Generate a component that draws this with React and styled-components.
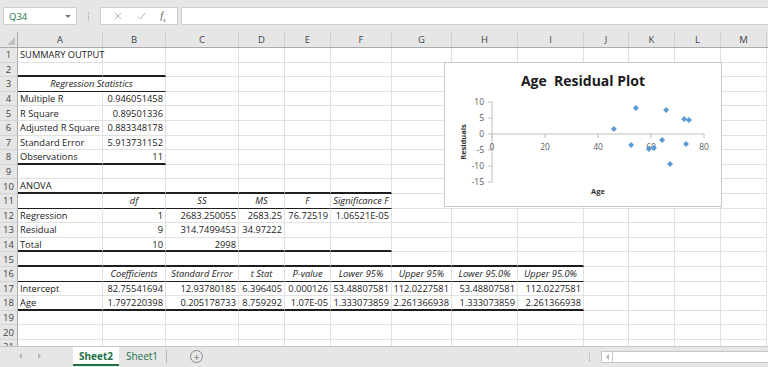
import React from 'react';
import styled, { createGlobalStyle } from 'styled-components';

const COLS = [85, 63, 73, 46, 46, 61, 60, 66, 66, 45, 46, 46, 46];
const LETTERS = 'ABCDEFGHIJKLM'.split('');
const TEMPLATE = `18px ${COLS.map(w => w + 'px').join(' ')}`;
const GREEN = '#217346';

const GlobalStyle = createGlobalStyle`
  html, body {
    margin: 0;
    padding: 0;
  }
  body {
    width: 768px;
    height: 367px;
    overflow: hidden;
    background: #fff;
    font-family: "Open Sans", "Liberation Sans", sans-serif;
  }
`

const Window = styled.div`
  display: flex;
  flex-direction: column;
  width: 768px;
  height: 367px;
  overflow: hidden;
`

/* formula bar */
const FormulaBar = styled.div`
  display: flex;
  align-items: flex-start;
  height: 32px;
  padding: 7px 0 0 3px;
  box-sizing: border-box;
  background: #e6e6e6;
`
const Box = styled.div`
  height: 18px;
  box-sizing: border-box;
  background: #fff;
  border: 1px solid #cfcfcf;
  display: flex;
  align-items: center;
`
const NameBox = styled(Box)`
  width: 74px;
  justify-content: space-between;
  padding: 0 5px 0 5px;
  font-size: 9.5px;
  color: ${GREEN};
`
const Caret = styled.span`
  width: 0;
  height: 0;
  border-left: 3px solid transparent;
  border-right: 3px solid transparent;
  border-top: 3px solid #7a7a7a;
`
const Grip = styled.div`
  width: 1px;
  height: 9px;
  margin: 5px 10px 0 11px;
  border-left: 1px dotted #a6a6a6;
`
const FuncBox = styled(Box)`
  width: 78px;
  justify-content: space-around;
  padding: 0 4px 0 6px;
`
const Fx = styled.span`
  font-family: "Liberation Serif", serif;
  font-style: italic;
  font-size: 10px;
  color: #555;
  sub {
    font-size: 6px;
  }
`
const FormulaInput = styled(Box)`
  flex: 1;
  margin-left: 3px;
  border-right: none;
`

/* grid */
const HeaderRow = styled.div`
  display: grid;
  grid-template-columns: ${TEMPLATE};
  height: 16px;
  background: #e6e6e6;
  border-bottom: 1px solid #ababab;
  box-sizing: border-box;
`
const ColHead = styled.div`
  display: flex;
  align-items: center;
  justify-content: center;
  font-size: 9.5px;
  color: #444;
  border-right: 1px solid ${p => (p.$corner ? '#ababab' : '#d0d0d0')};
  position: relative;
`
const CornerMark = styled.span`
  position: absolute;
  right: 2px;
  bottom: 2px;
  width: 0;
  height: 0;
  border-left: 8px solid transparent;
  border-bottom: 8px solid #c2c2c2;
`
const Sheet = styled.div`
  position: relative;
  display: grid;
  grid-template-columns: ${TEMPLATE};
  grid-auto-rows: 14.6px;
  height: 298px;
  overflow: hidden;
`
const RowHead = styled.div`
  display: flex;
  align-items: center;
  justify-content: center;
  font-size: 9.5px;
  color: #444;
  background: #e6e6e6;
  border-right: 1px solid #ababab;
  border-bottom: 1px solid #d4d4d4;
  box-sizing: border-box;
`
const LINES = {
  thick: '2px solid #1e1e1e',
  thin: '1px solid #1e1e1e',
  none: '1px solid #e1e1e1',
}
const Cell = styled.div`
  grid-column: span ${p => p.$span || 1};
  display: flex;
  align-items: center;
  justify-content: ${p => (p.$align === 'right' ? 'flex-end' : p.$align === 'center' ? 'center' : 'flex-start')};
  padding: 0 2px;
  box-sizing: border-box;
  border-right: 1px solid #e1e1e1;
  border-bottom: ${p => LINES[p.$line || 'none']};
  font-size: 9.3px;
  font-style: ${p => (p.$italic ? 'italic' : 'normal')};
  color: #1a1a1a;
  white-space: nowrap;
  overflow: visible;
`

/* chart */
const ChartFrame = styled.div`
  position: absolute;
  top: 14px;
  left: 444px;
  width: 278px;
  height: 145px;
  box-sizing: border-box;
  background: #fff;
  border: 1px solid #c9c9c9;
  z-index: 2;
`
const ChartTitle = styled.text`
  font-family: "Open Sans", sans-serif;
  font-weight: 700;
  font-size: 14px;
  white-space: pre;
  fill: #1a1a1a;
`
const AxisLabel = styled.text`
  font-family: "Open Sans", sans-serif;
  font-size: 8.5px;
  fill: #595959;
`
const AxisTitle = styled.text`
  font-family: "Open Sans", sans-serif;
  font-weight: 700;
  font-size: 7.5px;
  fill: #333;
`

/* tab bar */
const TabBar = styled.div`
  display: flex;
  align-items: flex-start;
  height: 21px;
  background: #e6e6e6;
  border-top: 1px solid #c6c6c6;
  box-sizing: border-box;
`
const Nav = styled.div`
  display: flex;
  align-items: center;
  gap: 16px;
  width: 73px;
  height: 18px;
  padding-left: 19px;
  box-sizing: border-box;
`
const Arrow = styled.span`
  width: 0;
  height: 0;
  border-top: 3px solid transparent;
  border-bottom: 3px solid transparent;
  ${p => (p.$dir === 'left' ? 'border-right: 3px solid #b5b5b5;' : 'border-left: 3px solid #b5b5b5;')}
`
const Tab = styled.div`
  width: 46px;
  height: 17px;
  display: flex;
  align-items: center;
  justify-content: center;
  font-size: 10px;
  color: ${GREEN};
  font-weight: ${p => (p.$active ? 700 : 400)};
  background: ${p => (p.$active ? '#fff' : 'transparent')};
  border-bottom: 2px solid ${p => (p.$active ? GREEN : 'transparent')};
`
const TabSep = styled.div`
  width: 1px;
  height: 13px;
  margin: 3px 0 0 1px;
  background: #b8b8b8;
`
const AddSheet = styled.div`
  width: 11px;
  height: 11px;
  margin: 3px 0 0 23px;
  border: 1px solid #8a8a8a;
  border-radius: 50%;
  display: flex;
  align-items: center;
  justify-content: center;
  font-size: 10px;
  line-height: 1;
  color: #6a6a6a;
`
const Spacer = styled.div`
  flex: 1;
`
const Dots = styled.div`
  width: 1px;
  height: 9px;
  margin: 5px 10px 0 0;
  border-left: 1px dotted #a6a6a6;
`
const ScrollBar = styled.div`
  display: flex;
  width: 167px;
  height: 12px;
  margin-top: 4px;
  box-sizing: border-box;
  background: #fff;
  border: 1px solid #c6c6c6;
  border-right: none;
`
const ScrollBtn = styled.div`
  width: 10px;
  display: flex;
  align-items: center;
  justify-content: center;
  border-right: 1px solid #c6c6c6;
`

const ROWS = [
  { n: 1, cells: ['SUMMARY OUTPUT'] },
  { n: 2, line: [2, 'thick'] },
  { n: 3, cells: [{ h: 'Regression Statistics', span: 2 }], line: [2, 'thin'] },
  { n: 4, cells: ['Multiple R', '0.946051458'] },
  { n: 5, cells: ['R Square', '0.89501336'] },
  { n: 6, cells: ['Adjusted R Square', '0.883348178'] },
  { n: 7, cells: ['Standard Error', '5.913731152'] },
  { n: 8, cells: ['Observations', '11'], line: [2, 'thick'] },
  { n: 9 },
  { n: 10, cells: ['ANOVA'], line: [6, 'thick'] },
  { n: 11, cells: ['', { h: 'df' }, { h: 'SS' }, { h: 'MS' }, { h: 'F' }, { h: 'Significance F' }], line: [6, 'thin'] },
  { n: 12, cells: ['Regression', '1', '2683.250055', '2683.25', '76.72519', '1.06521E-05'] },
  { n: 13, cells: ['Residual', '9', '314.7499453', '34.97222'] },
  { n: 14, cells: ['Total', '10', '2998'], line: [6, 'thick'] },
  { n: 15, line: [9, 'thick'] },
  {
    n: 16,
    cells: ['', { h: 'Coefficients' }, { h: 'Standard Error' }, { h: 't Stat' }, { h: 'P-value' },
      { h: 'Lower 95%' }, { h: 'Upper 95%' }, { h: 'Lower 95.0%' }, { h: 'Upper 95.0%' }],
    line: [9, 'thin'],
  },
  {
    n: 17,
    cells: ['Intercept', '82.75541694', '12.93780185', '6.396405', '0.000126', '53.48807581',
      '112.0227581', '53.48807581', '112.0227581'],
  },
  {
    n: 18,
    cells: ['Age', '1.797220398', '0.205178733', '8.759292', '1.07E-05', '1.333073859',
      '2.261366938', '1.333073859', '2.261366938'],
    line: [9, 'thick'],
  },
  { n: 19 },
  { n: 20 },
  { n: 21 },
];

const isNum = v => /^-?[\d.]+(E-?\d+)?$/.test(v);

function SheetRow({ n, cells = [], line }) {
  const out = [<RowHead key="h">{n}</RowHead>];
  let c = 0;
  while (c < LETTERS.length) {
    const raw = cells[c];
    const span = raw && raw.span ? raw.span : 1;
    const kind = line && c < line[0] ? line[1] : 'none';
    if (raw && typeof raw === 'object') {
      out.push(
        <Cell key={c} $span={span} $align="center" $italic $line={kind}>{raw.h}</Cell>
      );
    } else {
      out.push(
        <Cell key={c} $align={raw && isNum(raw) ? 'right' : 'left'} $line={kind}>{raw || ''}</Cell>
      );
    }
    c += span;
  }
  return out;
}

// residuals read off the plot
const POINTS = [
  [46.0, 1.56], [54.3, 8.13], [52.5, -3.44], [59.2, -4.69], [61.1, -4.38], [64.2, -1.88],
  [65.7, 7.5], [67.2, -9.38], [72.5, 4.69], [73.2, -3.13], [74.3, 4.38],
];
const X0 = 47;
const Y0 = 71;
const toX = a => X0 + a * 2.65;
const toY = r => Y0 - r * 3.2;

function ResidualChart() {
  return (
    <ChartFrame>
      <svg width="276" height="143" viewBox="0 0 276 143">
        <ChartTitle x="138" y="23" textAnchor="middle">{'Age  Residual Plot'}</ChartTitle>
        <line x1={X0} y1={toY(10)} x2={X0} y2={toY(-15)} stroke="#bfbfbf" />
        {[10, 5, 0, -5, -10, -15].map(v => (
          <g key={v}>
            <line x1={X0 - 4} y1={toY(v)} x2={X0} y2={toY(v)} stroke="#bfbfbf" />
            <AxisLabel x={X0 - 8} y={toY(v) + 3} textAnchor="end">{v}</AxisLabel>
          </g>
        ))}
        <line x1={X0} y1={Y0} x2={toX(80)} y2={Y0} stroke="#bfbfbf" />
        {[0, 20, 40, 60, 80].map(v => (
          <g key={v}>
            <line x1={toX(v)} y1={Y0} x2={toX(v)} y2={Y0 + 4} stroke="#bfbfbf" />
            <AxisLabel x={toX(v)} y={Y0 + 16} textAnchor="middle">{v}</AxisLabel>
          </g>
        ))}
        <AxisTitle x="0" y="0" textAnchor="middle" transform="translate(21 79) rotate(-90)">Residuals</AxisTitle>
        <AxisTitle x="153" y="131" textAnchor="middle">Age</AxisTitle>
        {POINTS.map(([a, r], i) => {
          const x = toX(a);
          const y = toY(r);
          return <path key={i} d={`M${x} ${y - 3}L${x + 3} ${y}L${x} ${y + 3}L${x - 3} ${y}Z`} fill="#5b9bd5" />;
        })}
      </svg>
    </ChartFrame>
  );
}

export default function App() {
  return (
    <Window>
      <GlobalStyle />
      <FormulaBar>
        <NameBox>Q34<Caret /></NameBox>
        <Grip />
        <FuncBox>
          <svg width="8" height="8" viewBox="0 0 8 8">
            <path d="M1 1L7 7M7 1L1 7" stroke="#b3b3b3" strokeWidth="1" />
          </svg>
          <svg width="9" height="8" viewBox="0 0 9 8">
            <path d="M1 4.5L3.5 7L8 1" stroke="#b3b3b3" strokeWidth="1" fill="none" />
          </svg>
          <Fx>f<sub>x</sub></Fx>
        </FuncBox>
        <FormulaInput />
      </FormulaBar>
      <HeaderRow>
        <ColHead $corner><CornerMark /></ColHead>
        {LETTERS.map(l => <ColHead key={l}>{l}</ColHead>)}
      </HeaderRow>
      <Sheet>
        {ROWS.map(r => <SheetRow key={r.n} {...r} />)}
        <ResidualChart />
      </Sheet>
      <TabBar>
        <Nav><Arrow $dir="left" /><Arrow $dir="right" /></Nav>
        <Tab $active>Sheet2</Tab>
        <Tab>Sheet1</Tab>
        <TabSep />
        <AddSheet>+</AddSheet>
        <Spacer />
        <Dots />
        <ScrollBar>
          <ScrollBtn><Arrow $dir="left" /></ScrollBtn>
        </ScrollBar>
      </TabBar>
    </Window>
  );
}
